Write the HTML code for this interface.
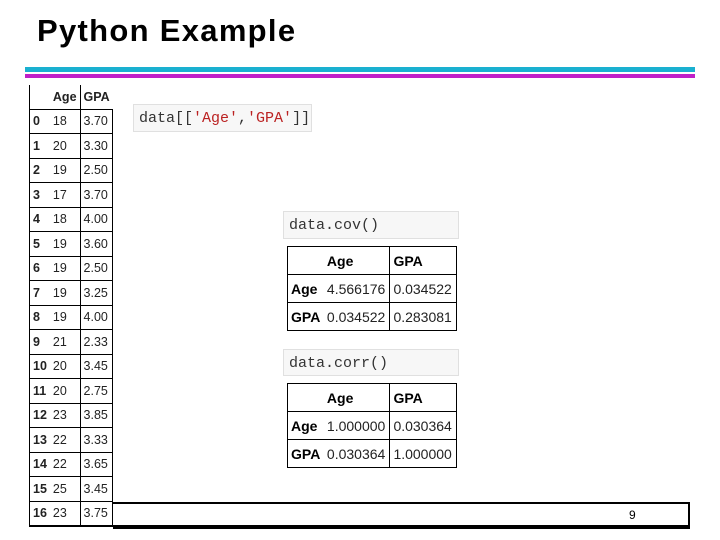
<!DOCTYPE html>
<html><head><meta charset="utf-8"><style>
body{margin:0;width:720px;height:540px;background:#fff;position:relative;overflow:hidden;font-family:"Liberation Sans",sans-serif}
.a{position:absolute}
.title{left:37px;top:13px;font-size:31px;font-weight:bold;color:#000;letter-spacing:1.3px}
.code{position:absolute;background:#f7f7f7;border:1px solid #e0e0e0;font-family:"Liberation Mono",monospace;font-size:15px;color:#333;padding-left:5px;box-sizing:border-box;line-height:28px}
table{border-collapse:collapse;position:absolute;font-size:13px;color:#222}
td{border:1px solid #000;padding:0 3px}
.t1 td{height:23.5px;font-size:12.5px}
.t1 td.i{border-right:none;font-weight:bold;width:16px}
.t1 td.g{border-left:none;width:14px}
.t2 td{height:27px;font-size:14px}
b{font-weight:bold;color:#000}
</style></head><body>
<div class="a title">Python Example</div>
<div class="a" style="left:25px;top:67px;width:670px;height:5px;background:#1ab0d0"></div>
<div class="a" style="left:25px;top:74px;width:670px;height:4px;background:#c020c8"></div>
<table class="t1" style="left:29px;top:85px;width:84px">
<tr><td class="i" style="border-top:none"></td><td class="g" style="border-top:none;font-weight:bold;text-align:right">Age</td><td style="border-top:none;border-right:none;font-weight:bold">GPA</td></tr>
<tr><td class="i">0</td><td class="g">18</td><td>3.70</td></tr>
<tr><td class="i">1</td><td class="g">20</td><td>3.30</td></tr>
<tr><td class="i">2</td><td class="g">19</td><td>2.50</td></tr>
<tr><td class="i">3</td><td class="g">17</td><td>3.70</td></tr>
<tr><td class="i">4</td><td class="g">18</td><td>4.00</td></tr>
<tr><td class="i">5</td><td class="g">19</td><td>3.60</td></tr>
<tr><td class="i">6</td><td class="g">19</td><td>2.50</td></tr>
<tr><td class="i">7</td><td class="g">19</td><td>3.25</td></tr>
<tr><td class="i">8</td><td class="g">19</td><td>4.00</td></tr>
<tr><td class="i">9</td><td class="g">21</td><td>2.33</td></tr>
<tr><td class="i">10</td><td class="g">20</td><td>3.45</td></tr>
<tr><td class="i">11</td><td class="g">20</td><td>2.75</td></tr>
<tr><td class="i">12</td><td class="g">23</td><td>3.85</td></tr>
<tr><td class="i">13</td><td class="g">22</td><td>3.33</td></tr>
<tr><td class="i">14</td><td class="g">22</td><td>3.65</td></tr>
<tr><td class="i">15</td><td class="g">25</td><td>3.45</td></tr>
<tr><td class="i">16</td><td class="g">23</td><td>3.75</td></tr>
</table>
<div class="code" style="left:133px;top:104px;width:179px;height:28px">data[[<span style="color:#b22">'Age'</span>,<span style="color:#b22">'GPA'</span>]]</div>
<div class="code" style="left:283px;top:211px;width:176px;height:28px">data.cov()</div>
<table class="t2" style="left:287px;top:246px;width:170px">
<tr><td style="border-right:none"></td><td style="border-left:none;font-weight:bold;color:#000">Age</td><td style="font-weight:bold;color:#000">GPA</td></tr>
<tr><td style="border-right:none"><b>Age</b></td><td style="border-left:none">4.566176</td><td>0.034522</td></tr>
<tr><td style="border-right:none"><b>GPA</b></td><td style="border-left:none">0.034522</td><td>0.283081</td></tr>
</table>
<div class="code" style="left:283px;top:349px;width:176px;height:27px">data.corr()</div>
<table class="t2" style="left:287px;top:383px;width:170px">
<tr><td style="border-right:none"></td><td style="border-left:none;font-weight:bold;color:#000">Age</td><td style="font-weight:bold;color:#000">GPA</td></tr>
<tr><td style="border-right:none"><b>Age</b></td><td style="border-left:none">1.000000</td><td>0.030364</td></tr>
<tr><td style="border-right:none"><b>GPA</b></td><td style="border-left:none">0.030364</td><td>1.000000</td></tr>
</table>
<div class="a" style="left:113px;top:502px;width:575px;height:23px;border:2px solid #000;border-left:none"></div>
<div class="a" style="left:29px;top:525px;width:661px;height:2px;background:#000"></div>
<div class="a" style="left:629px;top:508px;font-size:12px">9</div>
</body></html>
